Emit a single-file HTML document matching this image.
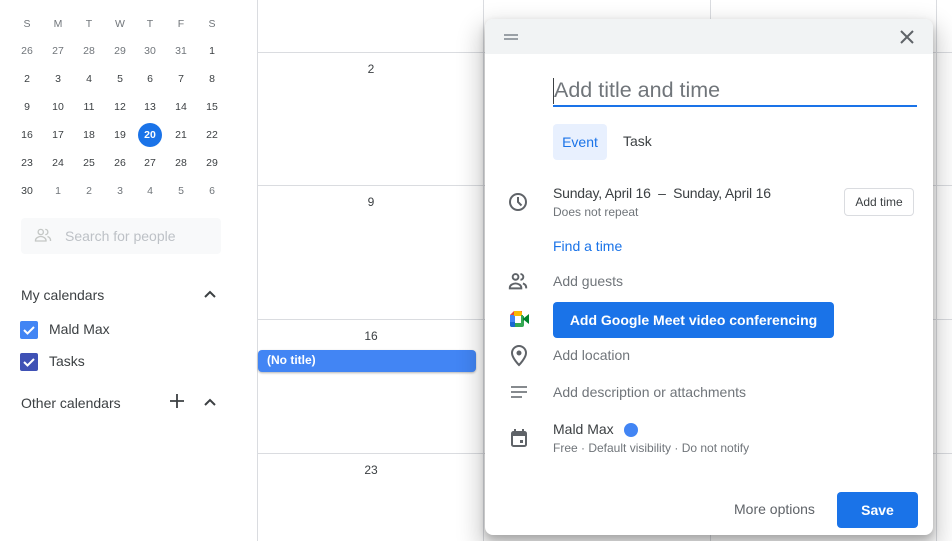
<!DOCTYPE html>
<html><head><style>
*{margin:0;padding:0;box-sizing:border-box}
body{width:952px;height:541px;overflow:hidden;background:#fff;font-family:"Liberation Sans",Arial,sans-serif;position:relative;color:#3c4043}
.a{position:absolute}
.mc{position:absolute;width:24px;text-align:center;font-size:10.5px;color:#3c4043}
.g{color:#70757a}
.vl{position:absolute;top:0;width:1px;height:541px;background:#dadce0}
.hl{position:absolute;left:257px;width:695px;height:1px;background:#dadce0}
.dn{position:absolute;width:30px;text-align:center;font-size:12px;color:#3c4043}
.ic{position:absolute;left:508px}
.t14{font-size:14px;color:#70757a}
</style></head><body>
<div id="mini"></div>
<script>
var cols=[27,58,89,120,150,181,212],rows=[24,51,79,107,135,163,191];
var h=['S','M','T','W','T','F','S'];
var d=[[26,27,28,29,30,31,1],[2,3,4,5,6,7,8],[9,10,11,12,13,14,15],[16,17,18,19,20,21,22],[23,24,25,26,27,28,29],[30,1,2,3,4,5,6]];
var s='';
for(var i=0;i<7;i++)s+='<div class="mc g" style="left:'+(cols[i]-12)+'px;top:'+(rows[0]-6)+'px">'+h[i]+'</div>';
for(var r=0;r<6;r++)for(var c=0;c<7;c++){var v=d[r][c];var gray=(r==0&&c<6)||(r==5&&c>0);
if(r==3&&c==4){s+='<div class="a" style="left:138px;top:123px;width:24px;height:24px;border-radius:50%;background:#1a73e8;color:#fff;font-size:10.5px;font-weight:bold;text-align:center;line-height:24px">20</div>';continue;}
s+='<div class="mc'+(gray?' g':'')+'" style="left:'+(cols[c]-12)+'px;top:'+(rows[r+1]-6)+'px">'+v+'</div>';}
document.getElementById('mini').innerHTML=s;
</script>
<div class="a" style="left:21px;top:218px;width:200px;height:36px;background:#f8f9fa;border-radius:4px"></div>
<svg class="a" style="left:33px;top:226px" width="20" height="18" viewBox="0 0 24 24" fill="none" stroke="#c4c7c5" stroke-width="1.8"><circle cx="9" cy="8" r="3.5"/><path d="M2 19c0-3 4-5 7-5s7 2 7 5v1H2z"/><path d="M15 4.5a3.5 3.5 0 0 1 0 7M18 14c2 .7 4 2 4 5v1"/></svg>
<div class="a" style="left:65px;top:228px;font-size:14px;color:#bdc1c6">Search for people</div>
<div class="a" style="left:21px;top:287px;font-size:14px;color:#3c4043">My calendars</div>
<svg class="a" style="left:202px;top:288px" width="16" height="12" viewBox="0 0 16 12"><path d="M3 9l5-5 5 5" fill="none" stroke="#3c4043" stroke-width="2"/></svg>
<div class="a" style="left:20px;top:321px;width:18px;height:18px;background:#4285f4;border-radius:2px"></div>
<svg class="a" style="left:20px;top:321px" width="18" height="18"><path d="M4 9l3.5 3.5L14 6" fill="none" stroke="#fff" stroke-width="2"/></svg>
<div class="a" style="left:49px;top:321px;font-size:14px;color:#3c4043">Mald Max</div>
<div class="a" style="left:20px;top:353px;width:18px;height:18px;background:#3f51b5;border-radius:2px"></div>
<svg class="a" style="left:20px;top:353px" width="18" height="18"><path d="M4 9l3.5 3.5L14 6" fill="none" stroke="#fff" stroke-width="2"/></svg>
<div class="a" style="left:49px;top:353px;font-size:14px;color:#3c4043">Tasks</div>
<div class="a" style="left:21px;top:395px;font-size:14px;color:#3c4043">Other calendars</div>
<svg class="a" style="left:169px;top:393px" width="16" height="16"><path d="M8 1v14M1 8h14" stroke="#3c4043" stroke-width="1.8"/></svg>
<svg class="a" style="left:202px;top:396px" width="16" height="12" viewBox="0 0 16 12"><path d="M3 9l5-5 5 5" fill="none" stroke="#3c4043" stroke-width="2"/></svg>
<div class="vl" style="left:257px"></div>
<div class="vl" style="left:483px"></div>
<div class="vl" style="left:710px"></div>
<div class="vl" style="left:936px"></div>
<div class="hl" style="top:52px"></div>
<div class="hl" style="top:185px"></div>
<div class="hl" style="top:319px"></div>
<div class="hl" style="top:453px"></div>
<div class="dn" style="left:356px;top:62px">2</div>
<div class="dn" style="left:356px;top:195px">9</div>
<div class="dn" style="left:356px;top:329px">16</div>
<div class="dn" style="left:356px;top:463px">23</div>
<div class="a" style="left:258px;top:350px;width:218px;height:22px;background:#4285f4;border-radius:4px;box-shadow:0 1px 2px rgba(0,0,0,.3);color:#fff;font-size:12px;font-weight:bold;padding:3px 9px">(No title)</div>
<div class="a" style="left:485px;top:19px;width:448px;height:516px;background:#fff;border-radius:8px;box-shadow:0 12px 24px 6px rgba(0,0,0,.2),0 4px 8px rgba(0,0,0,.2);overflow:hidden">
<div style="height:35px;background:#f1f3f4"></div>
</div>
<div class="a" style="left:504px;top:34px;width:14px;height:2px;background:#9aa0a6"></div>
<div class="a" style="left:504px;top:38px;width:14px;height:2px;background:#9aa0a6"></div>
<svg class="a" style="left:900px;top:30px" width="14" height="14"><path d="M1 1l12 12M13 1L1 13" stroke="#5f6368" stroke-width="2"/></svg>
<div class="a" style="left:553px;top:78px;width:1px;height:26px;background:#3c4043"></div>
<div class="a" style="left:554px;top:78px;font-size:21.5px;color:#70757a">Add title and time</div>
<div class="a" style="left:553px;top:105px;width:364px;height:2px;background:#1a73e8"></div>
<div class="a" style="left:553px;top:124px;width:54px;height:36px;background:#e8f0fe;border-radius:4px;color:#1a73e8;font-size:14px;text-align:center;line-height:36px">Event</div>
<div class="a" style="left:623px;top:133px;font-size:14px;color:#3c4043">Task</div>
<svg class="ic" style="top:192px" width="20" height="20" viewBox="0 0 20 20" fill="none" stroke="#5f6368" stroke-width="2"><circle cx="10" cy="10" r="8"/><path d="M10 5v5l3.5 3.5"/></svg>
<div class="a" style="left:553px;top:185px;font-size:14px;color:#3c4043;letter-spacing:-0.2px">Sunday, April 16 &nbsp;– &nbsp;Sunday, April 16</div>
<div class="a" style="left:553px;top:205px;font-size:12px;color:#70757a">Does not repeat</div>
<div class="a" style="left:844px;top:188px;width:70px;height:28px;border:1px solid #dadce0;border-radius:4px;font-size:12px;color:#3c4043;text-align:center;line-height:26px">Add time</div>
<div class="a" style="left:553px;top:238px;font-size:14px;color:#1a73e8">Find a time</div>
<svg class="ic" style="top:272px" width="20" height="18" viewBox="0 0 24 22" fill="none" stroke="#5f6368" stroke-width="2.4"><circle cx="9" cy="6" r="3.5"/><path d="M2 19c0-3 4-5 7-5s7 2 7 5v1H2z"/><path d="M15 2.5a3.5 3.5 0 0 1 0 7M18 14c2 .7 4 2 4 5v1"/></svg>
<div class="a t14" style="left:553px;top:273px">Add guests</div>
<svg class="ic" style="left:510px;top:311px" width="19" height="16" viewBox="0 0 19 16"><path d="M0 4L4 0h8v5H5v6H0z" fill="#ea4335"/><path d="M0 4h5v7H0z" fill="#4285f4"/><path d="M0 11h5v1h7v4H2a2 2 0 0 1-2-2z" fill="#34a853" /><path d="M0 11h5v5H2a2 2 0 0 1-2-2z" fill="#1967d2"/><path d="M4 0h6a2 2 0 0 1 2 2v3H4z" fill="#fbbc04"/><path d="M12 5v11h0a2 2 0 0 0 2-2V5z" fill="#34a853"/><path d="M12 5l2 2 5-4v10l-5-4-2 2z" fill="#00832d"/><path d="M12 4v8" stroke="#34a853" stroke-width="2"/></svg>
<div class="a" style="left:553px;top:302px;width:281px;height:36px;background:#1a73e8;border-radius:4px;color:#fff;font-size:14px;font-weight:bold;text-align:center;line-height:36px">Add Google Meet video conferencing</div>
<svg class="ic" style="left:510px;top:345px" width="18" height="22" viewBox="0 0 18 22" fill="none" stroke="#5f6368" stroke-width="2"><path d="M9 20s-7-7-7-12a7 7 0 0 1 14 0c0 5-7 12-7 12z"/><circle cx="9" cy="8" r="1.5" fill="#5f6368"/></svg>
<div class="a t14" style="left:553px;top:347px">Add location</div>
<svg class="ic" style="left:511px;top:386px" width="16" height="12"><path d="M0 1h16M0 6h16M0 11h11" stroke="#5f6368" stroke-width="1.6"/></svg>
<div class="a t14" style="left:553px;top:384px">Add description or attachments</div>
<svg class="ic" style="left:511px;top:429px" width="16" height="18" viewBox="0 0 16 18"><rect x="1" y="3" width="14" height="14" rx="1.5" fill="none" stroke="#5f6368" stroke-width="2"/><rect x="1" y="3" width="14" height="4" fill="#5f6368"/><path d="M4 0v4M12 0v4" stroke="#5f6368" stroke-width="2"/><rect x="9" y="11" width="3" height="3" fill="#5f6368"/></svg>
<div class="a" style="left:553px;top:421px;font-size:14px;color:#3c4043">Mald Max</div>
<div class="a" style="left:624px;top:423px;width:14px;height:14px;border-radius:50%;background:#4285f4"></div>
<div class="a" style="left:553px;top:441px;font-size:12px;color:#70757a">Free · Default visibility · Do not notify</div>
<div class="a" style="left:734px;top:501px;font-size:14px;color:#5f6368">More options</div>
<div class="a" style="left:837px;top:492px;width:81px;height:36px;background:#1a73e8;border-radius:4px;color:#fff;font-size:14px;font-weight:bold;text-align:center;line-height:36px">Save</div>
</body></html>
